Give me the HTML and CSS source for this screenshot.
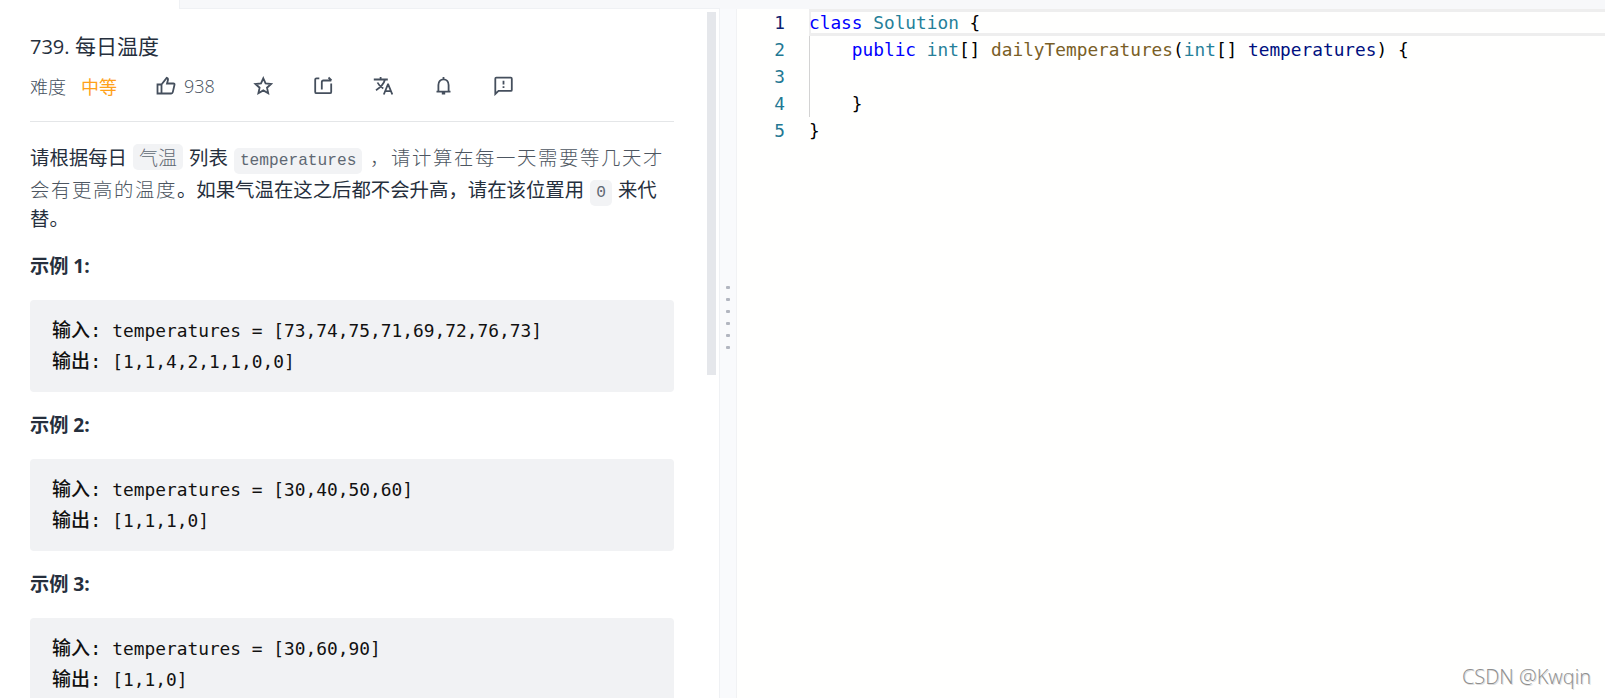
FILE: index.html
```
<!DOCTYPE html>
<html lang="zh-CN">
<head>
    <meta charset="UTF-8">
    <meta name="viewport" content="width=device-width, initial-scale=1.0">
    <title>739. 每日温度</title>
    <link rel="stylesheet" href="styles.css">
</head>
<body>
    <div class="tab-bar"><div class="active-tab"></div><div class="tab-rest"></div></div>
    <div class="main">
        <div class="question">
            <div class="content">
                <h1><span class="id">739.</span> 每日温度</h1>
                <div class="toolbar">
                    <span class="label">难度</span>
                    <span class="level">中等</span>
                    <button class="like">
                        <svg viewBox="0 0 20 20"><path d="M1.500 8.500h4v9h-4zM5.500 8.500l5.200-6.600c1.200.5 1.500 1.300 1.200 2.400L11 7.500h6.500c.8 0 1.200.5 1 1.300l-1.700 7.300c-.2.900-.7 1.400-1.600 1.400H5.500"/></svg>
                        <span>938</span>
                    </button>
                    <button><svg viewBox="0 0 20 20"><path d="M10.300 2.300l2.300 5.100 5.600.6-4.200 3.700 1.200 5.500-4.900-2.800-4.900 2.800 1.200-5.500L2.400 8l5.600-.6z"/></svg></button>
                    <button><svg viewBox="0 0 20 20"><path d="M6.300 2.300H3.500q-1.300 0-1.300 1.300v12.300q0 1.300 1.300 1.300h13.400q1.300 0 1.300-1.300V7.500M8.800 13.500V6q0-1.500 1.500-1.500h8M15.500 1.500l3 3"/></svg></button>
                    <button><svg viewBox="0 0 20 20"><path d="M.8 3.500h14M7.600 1v2.500M12 3.500c-1 4-4.500 7.800-9 10.800M4.500 6.500c1 2.200 3.300 4.500 5.800 6M10.800 18.500l4.100-10h.3l4.100 10M12.300 15.200h5.500"/></svg></button>
                    <button><svg viewBox="0 0 20 20"><path d="M3.500 15.700h14M5.400 15.500V9c0-3.400 2.100-5.600 5.100-5.600s5.100 2.200 5.100 5.600v6.500M10.500 1v2.400M8.800 17.500h3.400"/></svg></button>
                    <button><svg viewBox="0 0 20 20"><path d="M2.300 18V2.700q0-1 1-1h14.500q1 0 1 1v11.200q0 1-1 1H5.500zM10.500 4.800v3.700M10.500 10.200v1.900"/></svg></button>
                </div>
                <p class="desc">
                    <span class="row">请根据每日 <code class="zh">气温</code> 列表 <code>temperatures</code><span class="thin"> ，请计算在每一天需要等几天才</span></span>
                    <span class="row"><span class="thin">会有更高的温度</span>。如果气温在这之后都不会升高，请在该位置用 <code>0</code> 来代</span>
                    <span class="row last">替。</span>
                </p>
                <h2>示例 1:</h2>
                <pre><b>输入:</b> temperatures = [73,74,75,71,69,72,76,73]
<b>输出:</b> [1,1,4,2,1,1,0,0]</pre>
                <h2>示例 2:</h2>
                <pre><b>输入:</b> temperatures = [30,40,50,60]
<b>输出:</b> [1,1,1,0]</pre>
                <h2>示例 3:</h2>
                <pre><b>输入:</b> temperatures = [30,60,90]
<b>输出:</b> [1,1,0]</pre>
            </div>
            <div class="scrollbar"></div>
        </div>
        <div class="divider">
            <i></i><i></i><i></i><i></i><i></i><i></i>
        </div>
        <div class="editor">
            <div class="line current"><span class="num">1</span><div class="code"><span class="key">class</span> <span class="type">Solution</span> {</div></div>
            <div class="line"><span class="num">2</span><div class="code guide">    <span class="key">public</span> <span class="type">int</span>[] <span class="func">dailyTemperatures</span>(<span class="type">int</span>[] <span class="var">temperatures</span>) {</div></div>
            <div class="line"><span class="num">3</span><div class="code guide"></div></div>
            <div class="line"><span class="num">4</span><div class="code guide">    }</div></div>
            <div class="line"><span class="num">5</span><div class="code">}</div></div>
        </div>
    </div>
    <div class="watermark">CSDN @Kwqin</div>
</body>
</html>
```
FILE: styles.css
```
*{
    box-sizing: border-box;
}
body{
    margin: 0;
    height: 100vh;
    overflow: hidden;
    display: flex;
    flex-direction: column;
    background-color: #f7f8fa;
    color: #262f3d;
    font-family: "Open Sans", "Noto Sans CJK SC", sans-serif;
}
.tab-bar{
    height: 9px;
    flex: none;
    display: flex;
}
.active-tab{
    width: 179px;
    background-color: #fff;
}
.tab-rest{
    width: 541px;
    border: solid #eff1f4;
    border-width: 0 0 1px 1px;
}
.main{
    flex: 1;
    min-height: 0;
    display: flex;
}
.question{
    width: 720px;
    flex: none;
    display: flex;
    justify-content: space-between;
    background-color: #fff;
    border-right: 1px solid #eff1f4;
    overflow: hidden;
}
.content{
    width: 674px;
    padding-left: 30px;
}
.scrollbar{
    width: 9px;
    height: 363px;
    margin: 3px 3px 0 0;
    background-color: #e5e7eb;
}
h1{
    margin: 21px 0 0;
    height: 32px;
    line-height: 32px;
    font-size: 21px;
    font-weight: 400;
}
.id{
    font-size: 20px;
    font-weight: 500;
}
.toolbar{
    height: 60px;
    padding-bottom: 12px;
    display: flex;
    align-items: center;
    border-bottom: 1px solid #e4e6e8;
    font-size: 18px;
    font-weight: 300;
    color: #454f5d;
}
.label{
    margin-right: 15px;
}
.level{
    width: 36px;
    margin-right: 39px;
    font-weight: 400;
    color: #ffa119;
}
button{
    width: 20px;
    margin-right: 40px;
    padding: 0;
    border: none;
    background: none;
    font: inherit;
    color: inherit;
    display: flex;
    align-items: center;
}
.like{
    width: 58px;
    margin-right: 39px;
    gap: 8px;
}
svg{
    width: 20px;
    height: 20px;
    flex: none;
    fill: none;
    stroke: #454f5d;
    stroke-width: 1.8;
}
.desc{
    margin: 20px 0 0;
    font-size: 19.4px;
}
.row{
    display: block;
    height: 32px;
    line-height: 32px;
    white-space: nowrap;
}
.last{
    height: 28px;
    line-height: 26px;
}
.thin{
    font-weight: 300;
    letter-spacing: 1.6px;
    color: #4d5661;
}
code{
    margin: 0 1px;
    padding: 4px 6px;
    border-radius: 5px;
    background-color: #f2f3f5;
    font-family: "Liberation Mono", "Noto Sans CJK SC", monospace;
    font-size: 16.2px;
    font-weight: 300;
    color: #5f6873;
}
.zh{
    padding: 0 6px;
    font-family: "Noto Sans CJK SC", sans-serif;
    font-size: 19px;
    line-height: 26px;
    display: inline-block;
}
h2{
    margin: 16px 0 19px;
    height: 31px;
    line-height: 31px;
    font-size: 19.2px;
    font-weight: 700;
}
pre{
    margin: 0;
    height: 92px;
    padding: 15px 22px;
    border-radius: 4px;
    background-color: #f1f2f4;
    color: #111;
    font-family: "DejaVu Sans Mono", "Noto Sans CJK SC", monospace;
    font-size: 17.85px;
    line-height: 31px;
}
pre + h2{
    margin-top: 17px;
}
pre b{
    font-size: 19px;
    font-weight: 500;
}
.divider{
    width: 16px;
    flex: none;
    padding: 277px 0 0 6px;
    display: flex;
    flex-direction: column;
    gap: 9px;
    background-color: #f9fafc;
}
.divider i{
    width: 4px;
    height: 3px;
    border-radius: 1px;
    background-color: #b2b6c0;
}
.editor{
    flex: 1;
    background-color: #fffffe;
    border-left: 1px solid #f1f2f4;
    font-family: "DejaVu Sans Mono", monospace;
    font-size: 17.8px;
    color: #000;
}
.line{
    height: 27px;
    line-height: 27px;
    display: flex;
}
.num{
    width: 48px;
    margin-right: 24px;
    text-align: right;
    color: #237893;
}
.code{
    flex: 1;
    white-space: pre;
}
.current .num{
    color: #0b216f;
}
.current .code{
    border: solid #eee;
    border-width: 3px 0 3px 2px;
    line-height: 21px;
    text-indent: -2px;
}
.guide{
    border-left: 1px solid #d3d3d3;
    text-indent: -1px;
}
.key{
    color: #0000ff;
}
.type{
    color: #267f99;
}
.func{
    color: #795e26;
}
.var{
    color: #001080;
}
.watermark{
    position: absolute;
    right: 14px;
    bottom: 6px;
    font-size: 20px;
    line-height: 30px;
    font-weight: 300;
    color: #8e8e8e;
    text-shadow: 1px 1px 0 #ddd;
}
```
